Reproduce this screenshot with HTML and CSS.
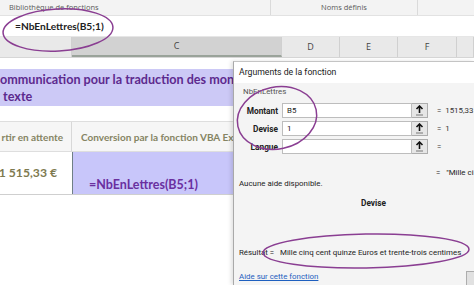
FILE: index.html
```html
<!DOCTYPE html>
<html lang="fr">
<head>
  <meta charset="UTF-8" />
  <title>NbEnLettres</title>
  <link rel="stylesheet" href="styles.css">
</head>
<body>
  <div class="ribbon">
    <div class="group lib">Bibliothèque de fonctions</div>
    <div class="group names">Noms définis</div>
    <div class="group"></div>
  </div>

  <div class="formula-bar">
    <span class="formula">=NbEnLettres(B5;1)</span>
  </div>

  <div class="cols">
    <div class="ch"></div>
    <div class="ch sel">C</div>
    <div class="ch">D</div>
    <div class="ch">E</div>
    <div class="ch">F</div>
    <div class="ch"></div>
  </div>

  <div class="sheet">
    <div class="blank"></div>
    <div class="band">ommunication pour la traduction des mon<br>&nbsp;texte</div>
    <div class="blank tall"></div>
    <div class="row head">
      <div class="cell">rtir en attente</div>
      <div class="cell">Conversion par la fonction VBA Exc</div>
    </div>
    <div class="row vals">
      <div class="cell amount">1 515,33 €</div>
      <div class="cell active">=NbEnLettres(B5;1)</div>
    </div>
  </div>

  <!-- boite de dialogue par dessus la feuille -->
  <div class="dialog">
    <div class="dlg-title">Arguments de la fonction</div>
    <div class="dlg-body">
      <div class="fname">NbEnLettres</div>
      <div class="arg">
        <span class="arg-label">Montant</span>
        <span class="arg-input">B5</span>
        <span class="arg-btn"><svg width="9" height="11" viewBox="0 0 9 11"><path d="M4.5 1v7M1.5 4l3-3 3 3" stroke="#111" stroke-width="1.6" fill="none"/><path d="M1 10h7" stroke="#777" stroke-width="1"/></svg></span>
        <span class="arg-val">=&nbsp;&nbsp;1515,33</span>
      </div>
      <div class="arg">
        <span class="arg-label">Devise</span>
        <span class="arg-input">1</span>
        <span class="arg-btn"><svg width="9" height="11" viewBox="0 0 9 11"><path d="M4.5 1v7M1.5 4l3-3 3 3" stroke="#111" stroke-width="1.6" fill="none"/><path d="M1 10h7" stroke="#777" stroke-width="1"/></svg></span>
        <span class="arg-val">=&nbsp;&nbsp;1</span>
      </div>
      <div class="arg">
        <span class="arg-label">Langue</span>
        <span class="arg-input"></span>
        <span class="arg-btn"><svg width="9" height="11" viewBox="0 0 9 11"><path d="M4.5 1v7M1.5 4l3-3 3 3" stroke="#111" stroke-width="1.6" fill="none"/><path d="M1 10h7" stroke="#777" stroke-width="1"/></svg></span>
        <span class="arg-val">=</span>
      </div>
      <div class="total">=&nbsp;&nbsp;&nbsp;"Mille ci</div>
      <div class="help">Aucune aide disponible.</div>
      <div class="arg-name">Devise</div>
      <div class="result">Résultat =&nbsp;&nbsp;&nbsp;Mille cinq cent quinze Euros et trente-trois centimes</div>
      <div class="footer">
        <a class="link" href="#">Aide sur cette fonction</a>
        <span class="ok"></span>
      </div>
    </div>
  </div>

  <!-- annotations -->
  <svg class="marks" width="474" height="285" viewBox="0 0 474 285">
    <ellipse cx="58" cy="30" rx="55" ry="21" transform="rotate(-3 58 30)"/>
    <ellipse cx="277" cy="118" rx="40" ry="31" transform="rotate(-12 277 118)"/>
    <ellipse cx="366" cy="251" rx="103" ry="17" transform="rotate(-1 366 251)"/>
  </svg>
</body>
</html>
```

FILE: styles.css
```css
body {
  margin: 0;
  width: 474px;
  height: 285px;
  overflow: hidden;
  background: #fff;
  font-family: Lato, 'Open Sans', sans-serif;
  position: relative;
}
.ribbon {
  display: flex;
  height: 15px;
  background: #f3f3f3;
  border-bottom: 1px solid #e2e2e2;
  font-family: 'Open Sans', sans-serif;
  font-size: 7.5px;
  color: #5a5a5a;
}
.group {
  border-right: 1px solid #dadada;
  line-height: 15px;
}
.lib {
  width: 261px;
  padding-left: 9px;
}
.names {
  width: 146px;
  text-align: center;
}
.group:last-child {
  border-right: none;
  flex: 1;
}
.formula-bar {
  height: 20px;
  background: #fff;
  border-bottom: 1px solid #e6e6e6;
  display: flex;
  align-items: center;
  padding-left: 15px;
}
.formula {
  font-size: 10.2px;
  font-weight: bold;
  color: #222;
}
.cols {
  display: grid;
  grid-template-columns: 72px 210px 58px 58px 59px 1fr;
  height: 20px;
  background: #e9e9e9;
  border-bottom: 1px solid #d6d6d6;
}
.ch {
  border-right: 1px solid #d0d0d0;
  text-align: center;
  line-height: 20px;
  font-family: 'Open Sans', sans-serif;
  font-size: 9px;
  color: #444;
}
.ch.sel {
  background: #d2d2d2;
  border-bottom: 2px solid #9aa39a;
  line-height: 18px;
}
.blank {
  height: 11px;
}
.blank.tall {
  height: 15px;
}
.band {
  height: 37px;
  background: #ccc9f6;
  color: #5d2a8e;
  font-weight: bold;
  font-size: 12.6px;
  line-height: 17px;
  padding-top: 2px;
  box-sizing: border-box;
  white-space: nowrap;
  overflow: hidden;
}
.row {
  display: grid;
  grid-template-columns: 72px 210px 1fr;
}
.head {
  height: 31px;
  background: #f6f6f6;
  border-top: 1px solid #dedede;
  border-bottom: 1px solid #dedede;
  box-sizing: border-box;
}
.head .cell {
  border-right: 1px solid #d8d8d8;
  font-weight: bold;
  font-size: 10px;
  color: #858463;
  display: flex;
  align-items: center;
  justify-content: flex-end;
  padding-right: 8px;
  white-space: nowrap;
  overflow: hidden;
}
.head .cell + .cell {
  justify-content: flex-start;
  padding-left: 9px;
}
.vals {
  height: 42px;
  border-bottom: 1px solid #cfcfcf;
}
.vals .cell {
  font-weight: bold;
  white-space: nowrap;
}
.amount {
  font-size: 12.2px;
  color: #7e7a50;
  display: flex;
  align-items: center;
  justify-content: flex-end;
  padding-right: 15px;
  padding-bottom: 2px;
}
.active {
  background: #c8c6fa;
  border-left: 1px solid #6f7f86;
  color: #6a2fa0;
  font-size: 12.5px;
  padding-left: 16px;
  padding-top: 25px;
  box-sizing: border-box;
}
.dialog {
  position: absolute;
  left: 233px;
  top: 61px;
  width: 241px;
  height: 224px;
  overflow: hidden;
  background: #f4f4f4;
  border-left: 1px solid #a9a9a9;
  border-top: 1px solid #c4c4c4;
  box-sizing: border-box;
  box-shadow: -2px 0 4px rgba(0, 0, 0, 0.12);
  font-family: Roboto, 'Open Sans', sans-serif;
  color: #222;
}
.dlg-title {
  height: 21px;
  line-height: 21px;
  padding-left: 5px;
  background: #fff;
  font-size: 8.7px;
  color: #1a1a1a;
}
.dlg-body {
  padding: 3px 0 0 5px;
  font-size: 7.9px;
}
.fname {
  padding-left: 4px;
  height: 14px;
  line-height: 12px;
  color: #555;
}
.arg {
  display: flex;
  align-items: center;
  height: 15px;
  margin-top: 3px;
}
.arg:first-of-type {
  margin-top: 1px;
}
.arg-label {
  width: 43px;
  text-align: right;
  font-weight: bold;
  font-size: 8.3px;
  padding-right: 4px;
  box-sizing: border-box;
}
.arg-input {
  width: 130px;
  height: 15px;
  background: #fff;
  border: 1px solid #bdbdbd;
  box-sizing: border-box;
  padding-left: 4px;
  line-height: 13px;
}
.arg-btn {
  width: 16px;
  height: 15px;
  background: #e6e6e6;
  border: 1px solid #adadad;
  border-left: none;
  box-sizing: border-box;
  display: flex;
  align-items: center;
  justify-content: center;
}
.arg-val {
  padding-left: 9px;
  color: #333;
}
.total {
  margin-top: 13px;
  padding-left: 197px;
  height: 11px;
  line-height: 11px;
  white-space: nowrap;
}
.help {
  height: 11px;
  line-height: 11px;
}
.arg-name {
  margin-top: 9px;
  text-align: center;
  padding-left: 34px;
  font-weight: bold;
  font-size: 8.3px;
  height: 11px;
  line-height: 11px;
}
.result {
  margin-top: 38px;
  height: 11px;
  line-height: 11px;
  white-space: nowrap;
}
.footer {
  margin-top: 11px;
  display: flex;
  align-items: center;
  height: 14px;
}
.link {
  color: #1e5fbf;
  text-decoration: underline;
}
.ok {
  margin-left: auto;
  margin-top: 8px;
  width: 8px;
  height: 18px;
  border: 1px solid #adadad;
  border-right: none;
  background: #e1e1e1;
  box-sizing: border-box;
}
.marks {
  position: absolute;
  left: 0;
  top: 0;
  pointer-events: none;
}
.marks ellipse {
  fill: none;
  stroke: #8a3e92;
  stroke-width: 1.5;
}
```
